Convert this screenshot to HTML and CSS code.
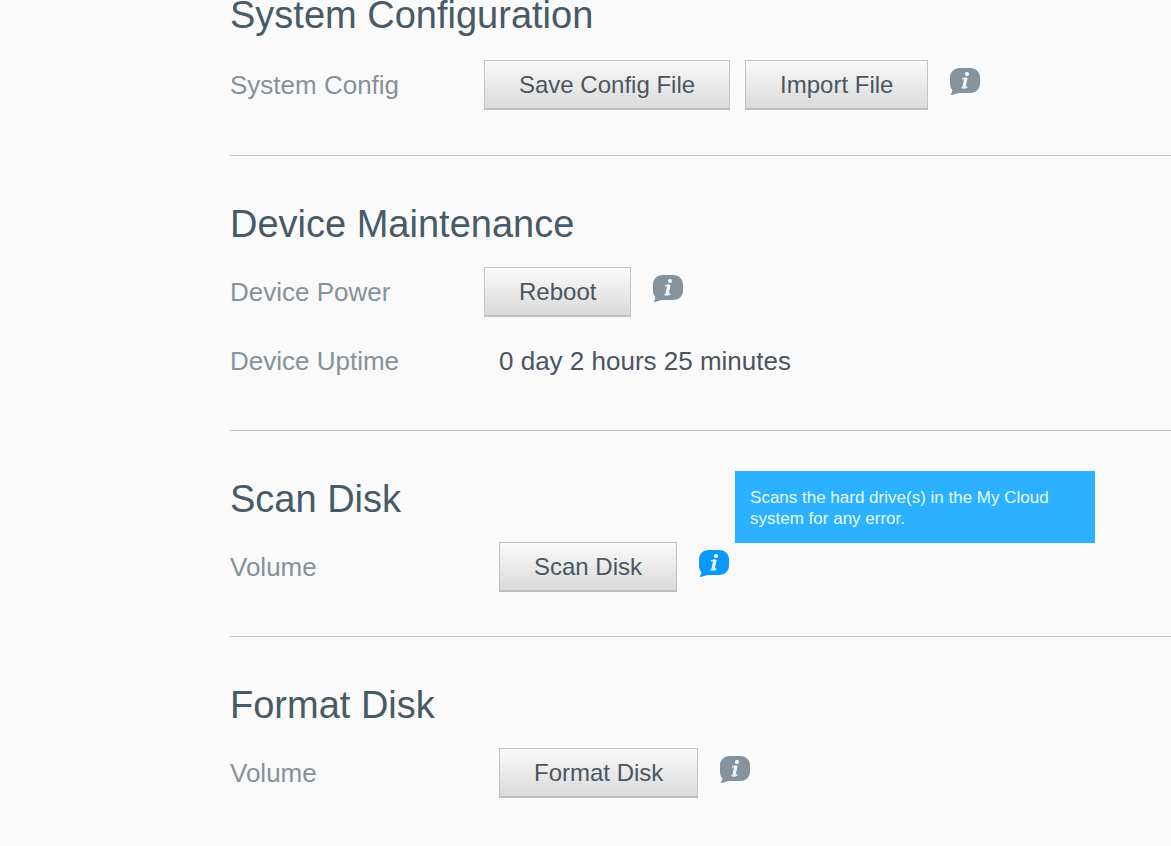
FILE: index.html
```html
<!DOCTYPE html>
<html lang="en">
<head>
<meta charset="utf-8">
<title>Utilities</title>
<meta name="viewport" content="width=device-width, initial-scale=1">
<link rel="stylesheet" href="styles.css">
</head>
<body>
<svg class="sprite" aria-hidden="true">
  <symbol id="info" viewBox="0 0 30 27">
    <path fill="currentColor" d="M10 0H20C26 0 30 4 30 9.500V15.500C30 21 26 25 20 25H8.500C6.500 25.200 4 27 .5 27C1.800 25 2.600 23.500 2.200 21.800C.6 20 0 18 0 15.500V9.500C0 4 4 0 10 0Z"/>
    <circle cx="17" cy="6" r="2.100" fill="#fff" fill-opacity=".95"/>
    <path fill="none" stroke="#fff" stroke-opacity=".9" stroke-width="3.200" d="M16 9.600L13.900 19.600"/>
    <path fill="none" stroke="#fff" stroke-opacity=".8" stroke-width="1.600" d="M12 10.700L16.800 10.200M11.400 19.600Q14.500 20.800 17.400 18.600"/>
  </symbol>
</svg>
<main class="settings">
  <section class="section">
    <h2 class="title">System Configuration</h2>
    <div class="row">
      <span class="label">System Config</span>
      <div class="actions">
        <button class="btn" type="button">Save Config File</button>
        <button class="btn" type="button">Import File</button>
      </div>
      <div class="help"><button class="info" type="button" aria-label="About system config"><svg class="icon"><use href="#info"/></svg></button></div>
    </div>
  </section>
  <section class="section">
    <h2 class="title">Device Maintenance</h2>
    <div class="row">
      <span class="label">Device Power</span>
      <div class="actions"><button class="btn" type="button">Reboot</button></div>
      <div class="help"><button class="info" type="button" aria-label="About device power"><svg class="icon"><use href="#info"/></svg></button></div>
    </div>
    <div class="row">
      <span class="label">Device Uptime</span>
      <div class="actions indent"><span class="value">0 day 2 hours 25 minutes</span></div>
    </div>
  </section>
  <section class="section">
    <h2 class="title">Scan Disk</h2>
    <div class="row">
      <span class="label">Volume</span>
      <div class="actions indent"><button class="btn" type="button">Scan Disk</button></div>
      <div class="help">
        <button class="info active" type="button" aria-label="About scan disk" aria-describedby="scan-tip"><svg class="icon"><use href="#info"/></svg></button>
        <div class="tooltip" id="scan-tip" role="tooltip">Scans the hard drive(s) in the My Cloud system for any error.</div>
      </div>
    </div>
  </section>
  <section class="section">
    <h2 class="title">Format Disk</h2>
    <div class="row">
      <span class="label">Volume</span>
      <div class="actions indent"><button class="btn" type="button">Format Disk</button></div>
      <div class="help"><button class="info" type="button" aria-label="About format disk"><svg class="icon"><use href="#info"/></svg></button></div>
    </div>
  </section>
</main>
</body>
</html>
```
FILE: styles.css
```css
* { box-sizing: border-box; }
body {
  margin: 0;
  background: #fafafa;
  color: #4b5760;
  font-family: "Liberation Sans", Arial, sans-serif;
  font-size: 26px;
  overflow: hidden;
}
.sprite { position: absolute; width: 0; height: 0; }
.settings { margin-left: 230px; }
.section {
  padding: 46px 0 44px;
  border-bottom: 1px solid #c6c6c6;
}
/* The page is scrolled part-way into the first section. */
.section:first-child { margin-top: -53px; padding-bottom: 45px; }
.section:first-child .title { margin-bottom: 23px; }
.section:last-child { border-bottom: 0; }
.title {
  margin: 0 0 21px;
  color: #485a65;
  font-size: 38px;
  font-weight: 400;
  line-height: 44px;
}
.row { display: flex; align-items: center; min-height: 50px; }
.row + .row { margin-top: 19px; }
.label { flex: 0 0 254px; color: #85929a; }
.actions { display: flex; gap: 15px; }
.indent { margin-left: 15px; }
.value { color: #4b5560; }
.btn {
  height: 50px;
  padding: 0 34px;
  border: 1px solid #c3c3c3;
  border-bottom: 2px solid #bfbfbf;
  border-radius: 0;
  background: linear-gradient(#fafafa, #dadada);
  color: #4a5660;
  font: inherit;
  font-size: 24px;
  white-space: nowrap;
}
.help { position: relative; align-self: flex-start; margin: 8px 0 0 22px; }
.info {
  display: block;
  padding: 0;
  border: 0;
  background: none;
  color: #85939e;
}
.info.active { color: #0a98fb; }
.icon { display: block; width: 30px; height: 27px; }
.tooltip {
  position: absolute;
  left: 36px;
  bottom: 34px;
  width: 360px;
  padding: 16px 15px 14px;
  background: #2bb1ff;
  color: #e6fbff;
  font-size: 17px;
  line-height: 21px;
}
```
